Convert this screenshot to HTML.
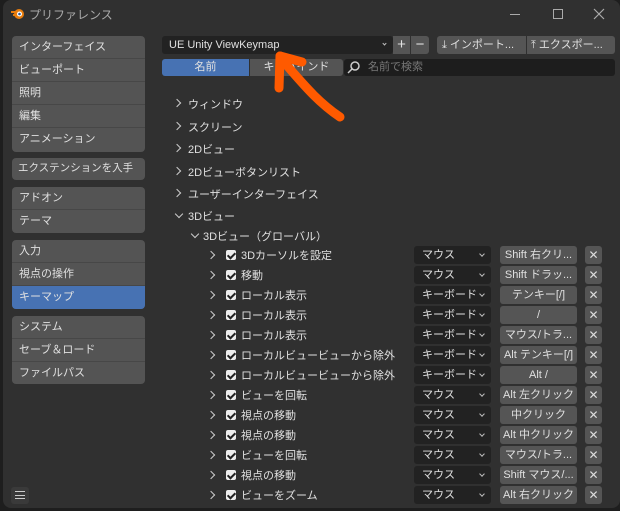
<!DOCTYPE html><html><head><meta charset="utf-8"><style>
*{margin:0;padding:0;box-sizing:border-box}
body{width:620px;height:511px;background:#1e1e1e;overflow:hidden;position:relative;font-family:"Liberation Sans","Noto Sans CJK JP",sans-serif;font-size:11px;color:#e0e0e0}
.win{position:absolute;left:3px;top:0;width:617px;height:508px;background:#303030;border-radius:8px}
.a{position:absolute;white-space:nowrap}
.grp{position:absolute;left:12px;width:133px;background:#545454;border-radius:4px;overflow:hidden}
.grp div{height:23px;line-height:22px;padding-left:7px;border-bottom:1px solid #474747;font-size:11px}
.grp div:last-child{border-bottom:none}
.act{background:#4772b3}
.chev{position:absolute;width:6px;height:6px;border-right:1.5px solid #ccc;border-bottom:1.5px solid #ccc}
.r{transform:rotate(-45deg)}
.d{transform:rotate(45deg)}
.cb{position:absolute;width:10px;height:10px;background:#eee;border-radius:2px}
.cb:after{content:"";position:absolute;left:3px;top:0.5px;width:3px;height:6px;border-right:2px solid #222;border-bottom:2px solid #222;transform:rotate(45deg)}
.dd{position:absolute;left:414px;width:77px;height:18px;background:#222;border-radius:3px;line-height:18px;padding-left:8px}
.dd:after{content:"";position:absolute;right:7px;top:6px;width:3px;height:3px;border-right:1px solid #bbb;border-bottom:1px solid #bbb;transform:rotate(45deg)}
.kb{position:absolute;left:500px;width:77px;height:18px;background:#555;border-radius:3px;line-height:18px;text-align:center}
.xb{position:absolute;left:585px;width:17px;height:18px;background:#555;border-radius:3px;line-height:18px;text-align:center;font-size:12px;color:#ddd}
</style></head><body>
<div class="win"></div>
<svg class="a" style="left:10px;top:6px" width="16" height="14" viewBox="0 0 16 14"><circle cx="9" cy="8" r="5" fill="#e87d0d"/><circle cx="9.5" cy="8" r="2.5" fill="#fff"/><circle cx="9.5" cy="8" r="1.3" fill="#2a5a9a"/><path d="M1 6 L6 6 M3 9 L6 9" stroke="#e87d0d" stroke-width="2"/></svg>
<div class="a" style="left:29px;top:6px;color:#aaa;font-size:12px">プリファレンス</div>
<div class="a" style="left:510px;top:14px;width:10px;height:1px;background:#aaa"></div>
<div class="a" style="left:553px;top:9px;width:10px;height:10px;border:1px solid #aaa"></div>
<svg class="a" style="left:593px;top:8px" width="12" height="12"><path d="M1 1L11 11M11 1L1 11" stroke="#aaa" stroke-width="1.2"/></svg>

<div class="grp" style="top:36px;height:116px"><div>インターフェイス</div><div>ビューポート</div><div>照明</div><div>編集</div><div>アニメーション</div></div>
<div class="grp" style="top:158px;height:22px"><div style="height:22px;line-height:21px;font-size:10.5px;padding-left:6px">エクステンションを入手</div></div>
<div class="grp" style="top:187px;height:46px"><div>アドオン</div><div>テーマ</div></div>
<div class="grp" style="top:240px;height:69px"><div>入力</div><div>視点の操作</div><div class="act">キーマップ</div></div>
<div class="grp" style="top:316px;height:68px"><div>システム</div><div>セーブ＆ロード</div><div>ファイルパス</div></div>
<div class="a" style="left:11px;top:487px;width:18px;height:17px;background:#3a3a3a;border-radius:3px"><div style="margin:4px 4px;height:8px;border-top:1px solid #ccc;border-bottom:1px solid #ccc;position:relative"><div style="position:absolute;top:3px;left:0;width:100%;height:1px;background:#ccc"></div></div></div>

<div class="a" style="left:162px;top:36px;width:231px;height:18px;background:#222;border-radius:3px;line-height:18px;padding-left:7px;font-size:11px">UE Unity ViewKeymap<span style="position:absolute;right:7px;top:6px;width:3px;height:3px;border-right:1px solid #bbb;border-bottom:1px solid #bbb;transform:rotate(45deg)"></span></div>
<div class="a" style="left:393px;top:36px;width:17px;height:18px;background:#555;line-height:17px;text-align:center;font-size:15px">+</div>
<div class="a" style="left:411px;top:36px;width:18px;height:18px;background:#555;border-radius:0 3px 3px 0;line-height:17px;text-align:center;font-size:15px">−</div>
<div class="a" style="left:437px;top:36px;width:89px;height:18px;background:#555;border-radius:3px 0 0 3px;line-height:18px;padding-left:5px">⤓ インポート...</div>
<div class="a" style="left:527px;top:36px;width:88px;height:18px;background:#555;border-radius:0 3px 3px 0;line-height:18px;padding-left:4px">⤒ エクスポー...</div>
<div class="a" style="left:162px;top:59px;width:87px;height:17px;background:#4772b3;border-radius:3px 0 0 3px;line-height:17px;text-align:center">名前</div>
<div class="a" style="left:250px;top:59px;width:93px;height:17px;background:#545454;border-radius:0 3px 3px 0;line-height:17px;text-align:center">キーバインド</div>
<div class="a" style="left:344px;top:59px;width:271px;height:17px;background:#1d1d1d;border-radius:3px;line-height:17px;padding-left:24px;color:#777">名前で検索</div>
<svg class="a" style="left:347px;top:60px" width="14" height="14"><circle cx="8" cy="6" r="4" fill="none" stroke="#ccc" stroke-width="1.5"/><path d="M5 9 L1 13" stroke="#ccc" stroke-width="1.5"/></svg>

<div class="chev r" style="left:174px;top:100px"></div><div class="a" style="left:188px;top:96px">ウィンドウ</div>
<div class="chev r" style="left:174px;top:123px"></div><div class="a" style="left:188px;top:119px">スクリーン</div>
<div class="chev r" style="left:174px;top:145px"></div><div class="a" style="left:188px;top:141px">2Dビュー</div>
<div class="chev r" style="left:174px;top:168px"></div><div class="a" style="left:188px;top:164px">2Dビューボタンリスト</div>
<div class="chev r" style="left:174px;top:190px"></div><div class="a" style="left:188px;top:186px">ユーザーインターフェイス</div>
<div class="chev d" style="left:176px;top:211px"></div><div class="a" style="left:188px;top:208px">3Dビュー</div>
<div class="chev d" style="left:192px;top:231px"></div><div class="a" style="left:203px;top:228px">3Dビュー（グローバル）</div>

<div class="chev r" style="left:208px;top:252px"></div><div class="cb" style="left:226px;top:250px"></div><div class="a" style="left:241px;top:247px">3Dカーソルを設定</div><div class="dd" style="top:246px">マウス</div><div class="kb" style="top:246px">Shift 右クリ...</div><div class="xb" style="top:246px">✕</div>
<div class="chev r" style="left:208px;top:272px"></div><div class="cb" style="left:226px;top:270px"></div><div class="a" style="left:241px;top:267px">移動</div><div class="dd" style="top:266px">マウス</div><div class="kb" style="top:266px">Shift ドラッ...</div><div class="xb" style="top:266px">✕</div>
<div class="chev r" style="left:208px;top:292px"></div><div class="cb" style="left:226px;top:290px"></div><div class="a" style="left:241px;top:287px">ローカル表示</div><div class="dd" style="top:286px">キーボード</div><div class="kb" style="top:286px">テンキー[/]</div><div class="xb" style="top:286px">✕</div>
<div class="chev r" style="left:208px;top:312px"></div><div class="cb" style="left:226px;top:310px"></div><div class="a" style="left:241px;top:307px">ローカル表示</div><div class="dd" style="top:306px">キーボード</div><div class="kb" style="top:306px">/</div><div class="xb" style="top:306px">✕</div>
<div class="chev r" style="left:208px;top:332px"></div><div class="cb" style="left:226px;top:330px"></div><div class="a" style="left:241px;top:327px">ローカル表示</div><div class="dd" style="top:326px">キーボード</div><div class="kb" style="top:326px">マウス/トラ...</div><div class="xb" style="top:326px">✕</div>
<div class="chev r" style="left:208px;top:352px"></div><div class="cb" style="left:226px;top:350px"></div><div class="a" style="left:241px;top:347px">ローカルビュービューから除外</div><div class="dd" style="top:346px">キーボード</div><div class="kb" style="top:346px">Alt テンキー[/]</div><div class="xb" style="top:346px">✕</div>
<div class="chev r" style="left:208px;top:372px"></div><div class="cb" style="left:226px;top:370px"></div><div class="a" style="left:241px;top:367px">ローカルビュービューから除外</div><div class="dd" style="top:366px">キーボード</div><div class="kb" style="top:366px">Alt /</div><div class="xb" style="top:366px">✕</div>
<div class="chev r" style="left:208px;top:392px"></div><div class="cb" style="left:226px;top:390px"></div><div class="a" style="left:241px;top:387px">ビューを回転</div><div class="dd" style="top:386px">マウス</div><div class="kb" style="top:386px">Alt 左クリック</div><div class="xb" style="top:386px">✕</div>
<div class="chev r" style="left:208px;top:412px"></div><div class="cb" style="left:226px;top:410px"></div><div class="a" style="left:241px;top:407px">視点の移動</div><div class="dd" style="top:406px">マウス</div><div class="kb" style="top:406px">中クリック</div><div class="xb" style="top:406px">✕</div>
<div class="chev r" style="left:208px;top:432px"></div><div class="cb" style="left:226px;top:430px"></div><div class="a" style="left:241px;top:427px">視点の移動</div><div class="dd" style="top:426px">マウス</div><div class="kb" style="top:426px">Alt 中クリック</div><div class="xb" style="top:426px">✕</div>
<div class="chev r" style="left:208px;top:452px"></div><div class="cb" style="left:226px;top:450px"></div><div class="a" style="left:241px;top:447px">ビューを回転</div><div class="dd" style="top:446px">マウス</div><div class="kb" style="top:446px">マウス/トラ...</div><div class="xb" style="top:446px">✕</div>
<div class="chev r" style="left:208px;top:472px"></div><div class="cb" style="left:226px;top:470px"></div><div class="a" style="left:241px;top:467px">視点の移動</div><div class="dd" style="top:466px">マウス</div><div class="kb" style="top:466px">Shift マウス/...</div><div class="xb" style="top:466px">✕</div>
<div class="chev r" style="left:208px;top:492px"></div><div class="cb" style="left:226px;top:490px"></div><div class="a" style="left:241px;top:487px">ビューをズーム</div><div class="dd" style="top:486px">マウス</div><div class="kb" style="top:486px">Alt 右クリック</div><div class="xb" style="top:486px">✕</div>

<svg class="a" style="left:0;top:0" width="620" height="511"><g fill="none" stroke="#ff5a00" stroke-width="9" stroke-linecap="round" stroke-linejoin="round"><path d="M280 56 L279 88"/><path d="M280 56 L302 62"/><path d="M282 60 C300 80 315 100 340 117"/></g></svg>
</body></html>
